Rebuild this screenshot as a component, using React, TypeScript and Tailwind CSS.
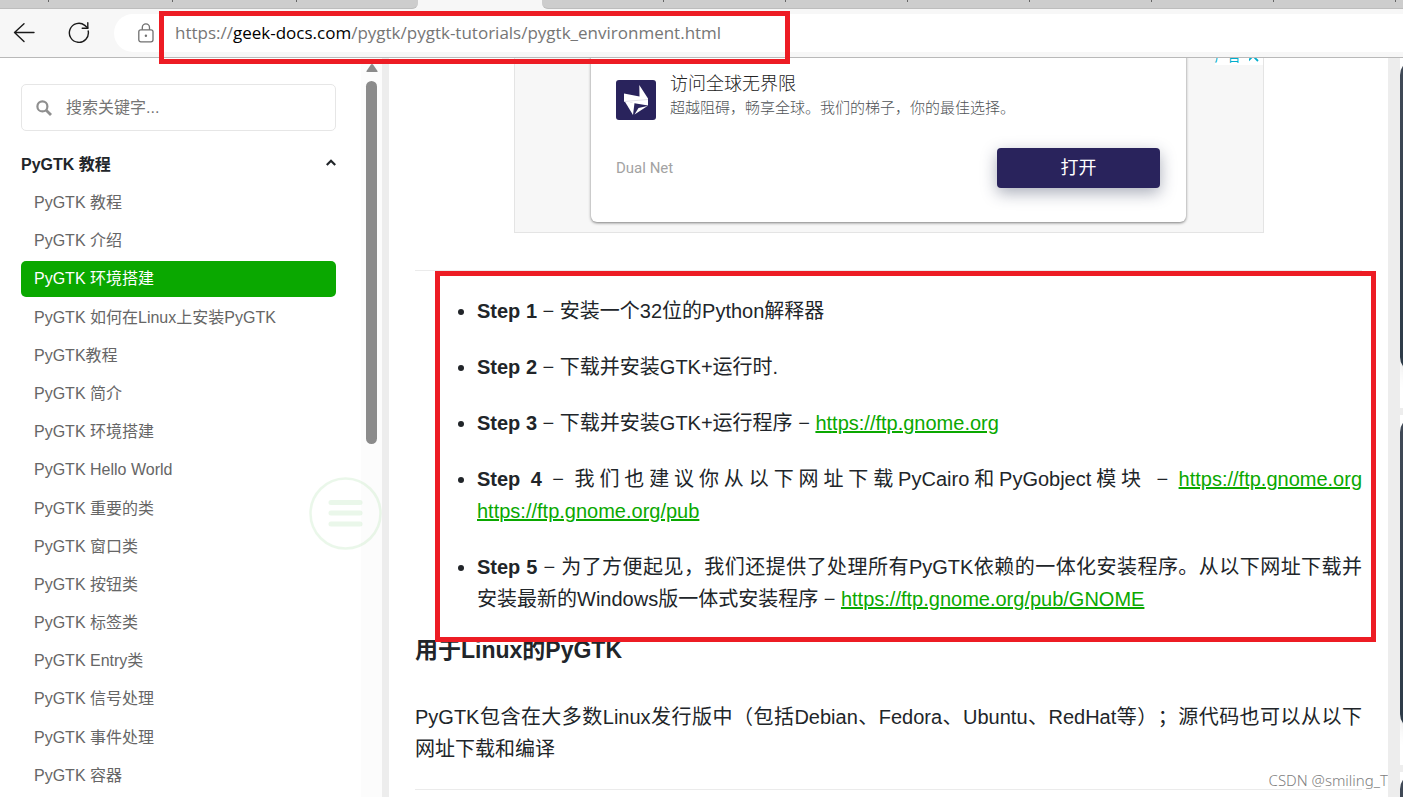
import React from 'react';

const menuItems = [
  'PyGTK 教程',
  'PyGTK 介绍',
  'PyGTK 环境搭建',
  'PyGTK 如何在Linux上安装PyGTK',
  'PyGTK教程',
  'PyGTK 简介',
  'PyGTK 环境搭建',
  'PyGTK Hello World',
  'PyGTK 重要的类',
  'PyGTK 窗口类',
  'PyGTK 按钮类',
  'PyGTK 标签类',
  'PyGTK Entry类',
  'PyGTK 信号处理',
  'PyGTK 事件处理',
  'PyGTK 容器',
];

const ACTIVE_INDEX = 2;

const steps = [
  { title: 'Step 1', text: '安装一个32位的Python解释器', links: [] },
  { title: 'Step 2', text: '下载并安装GTK+运行时.', links: [] },
  { title: 'Step 3', text: '下载并安装GTK+运行程序 −', links: ['https://ftp.gnome.org'] },
  {
    title: 'Step 4',
    text: '我们也建议你从以下网址下载PyCairo和PyGobject模块 −',
    links: ['https://ftp.gnome.org', 'https://ftp.gnome.org/pub'],
  },
  {
    title: 'Step 5',
    text: '为了方便起见，我们还提供了处理所有PyGTK依赖的一体化安装程序。从以下网址下载并安装最新的Windows版一体式安装程序 −',
    links: ['https://ftp.gnome.org/pub/GNOME'],
  },
];

const TabStrip: React.FC = () => (
  <div className="flex h-[9px] bg-[#f7f7f7]">
    <div className="flex w-[418px] rounded-br-md border-b border-[#bdbdbd] bg-[#cdcdcd]">
      <span className="h-[2px] w-[49px] border-r border-[#666]" />
      <span className="h-[2px] w-[124px] border-r border-[#666]" />
      <span className="h-[2px] w-[124px] border-r border-[#666]" />
    </div>
    <div className="w-[124px]" />
    <div className="flex flex-1 overflow-hidden rounded-bl-md border-b border-[#bdbdbd] bg-[#cdcdcd]">
      {Array.from({ length: 7 }, (_, i) => (
        <span key={i} className="h-[2px] w-[122px] flex-none border-r border-[#666]" />
      ))}
    </div>
  </div>
);

const BrowserBar: React.FC = () => (
  <header className="relative z-10 flex-none">
    <TabStrip />
    <div className="flex h-[49px] items-center border-b border-[#b9b9b9] bg-[#f7f7f7]">
      <button aria-label="Back" className="ml-[13px] h-[22px] w-[22px]">
        <svg viewBox="0 0 22 22" fill="none" stroke="#1a1a1a" strokeWidth="1.4" className="h-full w-full">
          <path d="M21 10.5H1.5M11 1.8L1.5 10.5L11 19.5" strokeLinecap="round" strokeLinejoin="round" />
        </svg>
      </button>
      <button aria-label="Refresh" className="ml-[33px] h-[22px] w-[22px]">
        <svg viewBox="0 0 22 22" fill="none" stroke="#1a1a1a" strokeWidth="1.4" className="h-full w-full">
          <path d="M20.2 9A9.5 9.5 0 1 1 16.8 3.4L19.8 6" strokeLinecap="round" />
          <path d="M19.8 0.8V6.2H14.2" strokeLinecap="round" strokeLinejoin="round" />
        </svg>
      </button>
      <div className="ml-[24px] flex h-[38px] flex-1 items-center rounded-l-full bg-white pl-6">
        <svg viewBox="0 0 16 20" fill="none" stroke="#707070" strokeWidth="1.3" className="h-5 w-4">
          <rect x="0.8" y="6.8" width="14.2" height="12" rx="2" />
          <path d="M4.3 6.8V4.4A3.6 3.6 0 0 1 11.5 4.4V6.8" />
          <circle cx="7.9" cy="12.8" r="1.2" fill="#707070" stroke="none" />
        </svg>
        <div className="ml-[21px] font-['Open_Sans','Noto_Sans',sans-serif] text-[17px] leading-6 whitespace-nowrap text-[#767676]">
          https://<span className="text-black">geek-docs.com</span>/pygtk/pygtk-tutorials/pygtk_environment.html
        </div>
      </div>
    </div>
    <div className="pointer-events-none absolute top-[11px] left-[159px] h-[53px] w-[631px] border-5 border-[#ed1c24]" />
  </header>
);

const Sidebar: React.FC = () => (
  <aside className="relative flex flex-none bg-white">
    <div className="flex w-[361px] flex-col pt-[26px] pr-[25px] pb-[3px] pl-[21px]">
      <label className="flex h-[47px] flex-none items-center rounded-[5px] border border-[#e6e6e6] pl-[14px]">
        <svg viewBox="0 0 16 16" fill="none" stroke="#8f8f8f" className="h-4 w-4">
          <circle cx="6.4" cy="6.4" r="5" strokeWidth="2.2" />
          <path d="M10.2 10.2L15 15" strokeWidth="2.8" />
        </svg>
        <input
          type="text"
          aria-label="搜索关键字"
          placeholder="搜索关键字..."
          className="ml-[14px] min-w-0 flex-1 text-base outline-none placeholder:text-[#757575]"
        />
      </label>
      <button className="mt-[22px] mb-2 flex h-6 flex-none items-center justify-between text-base font-bold text-[#212529]">
        PyGTK 教程
        <svg viewBox="0 0 10 7" fill="none" stroke="#212529" strokeWidth="2.2" className="mb-[5px] h-[7px] w-[10px]">
          <path d="M0.8 6L5 1.8L9.2 6" />
        </svg>
      </button>
      <nav className="flex flex-1 flex-col justify-between">
        {menuItems.map((item, i) => (
          <a
            key={i}
            href="#"
            className={`flex h-9 items-center rounded-[5px] px-[13px] text-base ${
              i === ACTIVE_INDEX ? 'bg-[#0aa800] text-white' : 'text-[#666]'
            }`}
          >
            {item}
          </a>
        ))}
      </nav>
    </div>

    {/* scrollbar */}
    <div className="flex w-[21px] flex-col items-center bg-[#fcfcfc]">
      <svg viewBox="0 0 12 8" className="mt-[6px] h-2 w-3 flex-none" fill="#8b8b8b">
        <path d="M5 0.5Q6 -0.3 7 0.5L11.5 7Q11.8 8 11 8H1Q0.2 8 0.5 7Z" />
      </svg>
      <div className="mt-[9px] h-[363px] w-[11px] rounded-full bg-[#8b8b8b]" />
    </div>

    <button aria-label="目录" className="absolute top-[419px] right-0 h-[73px] w-[73px] opacity-8">
      <svg viewBox="0 0 73 73" fill="none" stroke="#0aa800" className="h-full w-full">
        <circle cx="36.5" cy="36.5" r="35" strokeWidth="2.5" />
        <path d="M22 25.5H51M22 36H51M22 47H51" strokeWidth="5" strokeLinecap="round" />
      </svg>
    </button>
  </aside>
);

const AdBanner: React.FC = () => (
  <div className="relative mx-auto -mt-2 flex h-[183px] w-full max-w-[750px] justify-center border border-[#e4e4e4] bg-[#f7f7f7] pb-[10px]">
    <div className="w-[595px] rounded-b-md bg-white pt-[29px] pr-[26px] pl-[25px] shadow-[0_1px_3px_rgba(0,0,0,0.5)]">
      <div className="flex">
        <svg viewBox="0 0 40 40" className="h-10 w-10 flex-none">
          <rect width="40" height="40" rx="3" fill="#29235c" />
          <path d="M8 13.5L23.5 16.5L23.3 5L32 18.5V25.5L8 21.5Z" fill="#fff" />
          <path d="M8.5 21L18.5 23L17 35Z" fill="#fff" />
          <path d="M31.5 26L18.5 34.5L22.5 28Z" fill="#fff" />
          <path d="M8 21.5L32 19.5" stroke="#d5d3de" strokeWidth="0.7" />
        </svg>
        <div className="-mt-2 ml-[14px] font-light">
          <div className="text-lg leading-6 text-[#222]">访问全球无界限</div>
          <div className="text-[15px] leading-6 text-[#4f5357]">超越阻碍，畅享全球。我们的梯子，你的最佳选择。</div>
        </div>
      </div>
      <div className="mt-7 flex items-center justify-between">
        <span className="font-[Roboto,sans-serif] text-[15px] text-[#a3a3a3]">Dual Net</span>
        <button className="h-10 w-[163px] rounded bg-[#29235c] text-lg text-white shadow-[0_5px_16px_rgba(41,50,80,0.4)]">
          打开
        </button>
      </div>
    </div>
    <div className="absolute top-0 right-0 flex h-[14px] w-[48px] items-end justify-between bg-white text-[13px] leading-[17px] font-normal text-[#00aecd]">
      广告
      <svg viewBox="0 0 14 14" className="h-[14px] w-[14px]" fill="none" stroke="#00aecd" strokeWidth="1.8">
        <path d="M-1 0L9 10M9 0L-1 10" />
      </svg>
    </div>
  </div>
);

const Article: React.FC = () => (
  <main className="relative min-w-0 flex-1 overflow-hidden bg-white px-[26px] text-xl leading-8 text-[#212529]">
    <AdBanner />
    <hr className="mt-[37px] border-[#ebebeb]" />

    <div className="relative mt-6">
      <ul className="list-disc space-y-6 pl-[62px] text-justify">
        {steps.map((step) => (
          <li key={step.title}>
            <strong>{step.title}</strong> − {step.text}
            {step.links.map((link) => (
              <React.Fragment key={link}>
                {' '}
                <a href="#" className="text-[#0aa800] underline">
                  {link}
                </a>
              </React.Fragment>
            ))}
          </li>
        ))}
      </ul>
      <div className="pointer-events-none absolute -top-6 -right-[14px] -bottom-[27px] left-5 border-5 border-[#ed1c24]" />
    </div>

    <h3 className="mt-[19px] text-[23px] leading-8 font-bold">用于Linux的PyGTK</h3>
    <p className="mt-[35px] text-justify [text-spacing-trim:space-all]">
      PyGTK包含在大多数Linux发行版中（包括Debian、Fedora、Ubuntu、RedHat等）；源代码也可以从以下网址下载和编译
    </p>
    <hr className="mt-6 border-[#ebebeb]" />

    <div className="absolute right-0 bottom-[5px] font-['Noto_Sans',sans-serif] text-[15px] leading-6 font-light text-[#808080]">
      CSDN @smiling_T
    </div>
  </main>
);

// only the left edge of these cards is inside the window
const SideCards: React.FC = () => (
  <aside className="flex w-[3px] flex-none flex-col gap-[7px] overflow-hidden">
    {[0, 1, 2].map((n) => (
      <div key={n} className="h-[350px] w-[300px] flex-none bg-white pt-[1px]">
        <div className="h-[314px] rounded-2xl bg-linear-to-b from-[#414a57] to-[#2c3a47] shadow-lg" />
      </div>
    ))}
  </aside>
);

export default function App() {
  return (
    <div
      lang="zh-CN"
      className="flex h-screen flex-col overflow-hidden bg-[#ededed] font-['Liberation_Sans','Noto_Sans_CJK_SC',sans-serif]"
    >
      <BrowserBar />
      <div className="flex min-h-0 flex-1">
        <Sidebar />
        <div className="w-[7px] flex-none" />
        <Article />
        <div className="w-3 flex-none" />
        <SideCards />
      </div>
    </div>
  );
}
